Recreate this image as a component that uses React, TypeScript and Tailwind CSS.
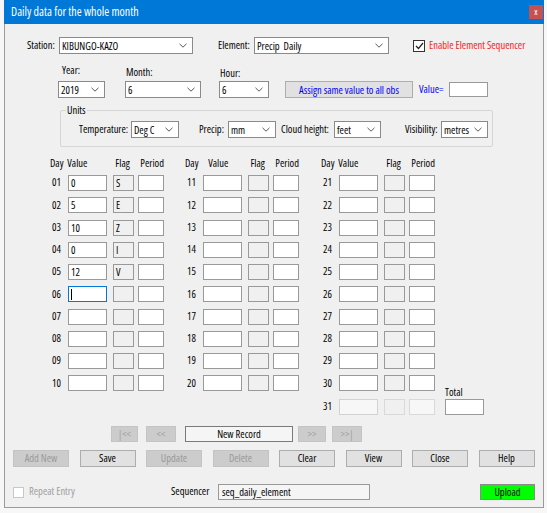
import React from "react";

const Chevron = () => (
  <svg width="8" height="5" viewBox="0 0 8 5" className="shrink-0">
    <path d="M0.5 0.8 L4 4.2 L7.5 0.8" fill="none" stroke="#5a5a5a" strokeWidth="1" />
  </svg>
);

function Combo({ className, value }: { className: string; value: string }) {
  return (
    <div
      className={
        "flex items-center justify-between border border-[#8a8a8a] bg-white pl-[2px] pr-[5px] leading-[14px] " +
        className
      }
    >
      <span className="whitespace-pre">{value}</span>
      <Chevron />
    </div>
  );
}

function Box({ className, value, focus }: { className: string; value?: string; focus?: boolean }) {
  return (
    <div
      className={
        "flex h-[16px] items-center border pl-[2px] leading-[14px] " +
        (focus ? "border-[#0078d7] " : "") +
        className
      }
    >
      {focus ? <span className="inline-block h-[11px] w-px bg-black" /> : <span>{value}</span>}
    </div>
  );
}

type Row = { day: string; value: string; flag: string; disabled?: boolean; focus?: boolean };

function DayColumn({ rows, valueHeader, className }: { rows: Row[]; valueHeader: string; className: string }) {
  return (
    <div className={"flex w-[114px] flex-col " + className}>
      <div className="flex h-[12px] items-center leading-[12px]">
        <span className="w-[18px]">Day</span>
        <span className={"w-[50px] " + valueHeader}>Value</span>
        <span className="w-[26px]">Flag</span>
        <span>Period</span>
      </div>
      <div className="mt-[3px] flex flex-col">
        {rows.map((r) => (
          <div key={r.day} className={"flex h-[22.25px] items-center " + (r.day === "31" ? "mt-[1px]" : "")}>
            <span className="w-[18px] pr-[7px] text-right">{r.day}</span>
            <Box
              className={
                "w-[39px] " +
                (r.disabled ? "border-[#d2d2d2] bg-[#f7f7f7]" : r.focus ? "bg-white" : "border-[#999999] bg-white")
              }
              value={r.value}
              focus={r.focus}
            />
            <Box
              className={
                "ml-[6px] w-[21px] " + (r.disabled ? "border-[#d9d9d9] bg-[#f0f0f0]" : "border-[#999999] bg-[#f0f0f0]")
              }
              value={r.flag}
            />
            <Box
              className={"ml-[4px] w-[26px] " + (r.disabled ? "border-[#d9d9d9] bg-[#f7f7f7]" : "border-[#999999] bg-white")}
            />
          </div>
        ))}
      </div>
    </div>
  );
}

const pad = (n: number) => (n < 10 ? "0" + n : "" + n);

const col1: Row[] = Array.from({ length: 10 }, (_, i) => {
  const data: [string, string][] = [
    ["0", "S"],
    ["5", "E"],
    ["10", "Z"],
    ["0", "I"],
    ["12", "V"],
  ];
  const d = data[i];
  return { day: pad(i + 1), value: d ? d[0] : "", flag: d ? d[1] : "", focus: i === 5 };
});
const col2: Row[] = Array.from({ length: 10 }, (_, i) => ({ day: pad(i + 11), value: "", flag: "" }));
const col3: Row[] = Array.from({ length: 11 }, (_, i) => ({
  day: pad(i + 21),
  value: "",
  flag: "",
  disabled: i === 10,
}));

function Btn({ label, disabled, className }: { label: string; disabled?: boolean; className?: string }) {
  return (
    <div
      className={
        "flex h-[17px] w-[56px] items-center justify-center border leading-[14px] " +
        (disabled ? "border-[#c4c4c4] bg-[#cccccc] text-[#9a9a9a]" : "border-[#adadad] bg-[#e1e1e1] text-black") +
        " " +
        (className || "")
      }
    >
      {label}
    </div>
  );
}

export default function App() {
  return (
    <div className="h-[513px] w-[547px] overflow-hidden bg-[#f7f7f7] pl-[4px] font-['Open_Sans',sans-serif] font-stretch-75% text-[10.5px] text-black">
      <div className="flex h-[508px] w-[540px] flex-col">
        {/* title bar */}
        <div className="flex h-[24px] shrink-0 items-center justify-between bg-[#0078d7] pl-[7px] pr-[1px]">
          <span className="text-[12px] text-white">Daily data for the whole month</span>
          <div className="flex h-[14px] w-[14px] items-center justify-center bg-[#c75050] text-[9px] leading-[10px] text-white">
            x
          </div>
        </div>

        {/* body */}
        <div className="flex flex-1 flex-col border-x border-b border-[#9a9a9a] bg-[#f0f0f0] pt-[13px]">
          {/* row 1 */}
          <div className="flex h-[17px] items-center pl-[22px]">
            <span className="w-[32px]">Station:</span>
            <Combo className="h-[17px] w-[134px]" value="KIBUNGO-KAZO" />
            <span className="ml-[25px] w-[36px]">Element:</span>
            <Combo className="h-[17px] w-[135px]" value="Precip  Daily" />
            <div className="ml-[24px] flex h-[12px] w-[12px] items-center justify-center border border-[#333333] bg-white">
              <svg width="9" height="8" viewBox="0 0 9 8">
                <path d="M1 4 L3.5 6.5 L8 1" fill="none" stroke="#222" strokeWidth="1.2" />
              </svg>
            </div>
            <span className="ml-[4px] text-[#ff1a1a]">Enable Element Sequencer</span>
          </div>

          {/* row 2 */}
          <div className="mt-[10px] flex items-end pl-[53px]">
            <div className="flex flex-col">
              <span className="mb-[5px] pl-[4px] leading-[12px]">Year:</span>
              <Combo className="h-[17px] w-[47px]" value="2019" />
            </div>
            <div className="ml-[20px] flex flex-col">
              <span className="mb-[3px] pl-[1px] leading-[12px]">Month:</span>
              <Combo className="h-[17px] w-[76px]" value="6" />
            </div>
            <div className="ml-[18px] flex flex-col">
              <span className="mb-[2px] pl-[1px] leading-[12px]">Hour:</span>
              <Combo className="h-[17px] w-[50px]" value="6" />
            </div>
            <div className="ml-[16px] flex h-[17px] items-center">
              <div className="flex h-[17px] w-[128px] items-center justify-center border border-[#adadad] bg-[#e1e1e1] leading-[14px] text-[#0000ff]">
                Assign same value to all obs
              </div>
              <span className="ml-[6px] w-[30px] text-[#0000ff]">Value=</span>
              <div className="h-[15px] w-[39px] border border-[#999999] bg-white" />
            </div>
          </div>

          {/* units */}
          <fieldset className="ml-[55px] mt-[6px] w-[433px] rounded-[2px] border border-[#d5d5d5] pb-[8px]">
            <legend className="ml-[5px] px-[1px] leading-[12px]">Units</legend>
            <div className="mt-[5px] flex h-[17px] items-center pl-[18px]">
              <span className="w-[52px]">Temperature:</span>
              <Combo className="h-[17px] w-[48px]" value="Deg C" />
              <span className="ml-[20px] w-[29px]">Precip:</span>
              <Combo className="h-[17px] w-[48px]" value="mm" />
              <span className="ml-[5px] w-[53px]">Cloud height:</span>
              <Combo className="h-[17px] w-[47px]" value="feet" />
              <span className="ml-[24px] w-[36px]">Visibility:</span>
              <Combo className="h-[17px] w-[47px]" value="metres" />
            </div>
          </fieldset>

          {/* grid */}
          <div className="mt-[10px] flex pl-[45px]">
            <DayColumn rows={col1} valueHeader="" className="" />
            <DayColumn rows={col2} valueHeader="pl-[6px]" className="ml-[21px]" />
            <DayColumn rows={col3} valueHeader="" className="ml-[22px]" />
            <div className="ml-[10px] flex flex-col justify-end">
              <span className="leading-[12px]">Total</span>
              <div className="mb-[3px] mt-[1px] h-[16px] w-[39px] border border-[#999999] bg-white" />
            </div>
          </div>

          {/* nav row */}
          <div className="mt-[8px] flex h-[16px] items-center pl-[106px] leading-[14px]">
            <div className="flex h-[16px] w-[27px] items-center justify-center border border-[#c4c4c4] bg-[#cccccc] text-[#a0a0a0]">
              |&lt;&lt;
            </div>
            <div className="ml-[8px] flex h-[16px] w-[30px] items-center justify-center border border-[#c4c4c4] bg-[#cccccc] text-[#a0a0a0]">
              &lt;&lt;
            </div>
            <div className="ml-[9px] flex h-[16px] w-[108px] items-center justify-center border border-[#7a7a7a] bg-[#f5f5f5]">
              New Record
            </div>
            <div className="ml-[5px] flex h-[16px] w-[28px] items-center justify-center border border-[#c4c4c4] bg-[#cccccc] text-[#a0a0a0]">
              &gt;&gt;
            </div>
            <div className="ml-[6px] flex h-[16px] w-[30px] items-center justify-center border border-[#c4c4c4] bg-[#cccccc] text-[#a0a0a0]">
              &gt;&gt;|
            </div>
          </div>

          {/* action buttons */}
          <div className="mt-[8px] flex gap-[10.5px] pl-[8px]">
            <Btn label="Add New" disabled />
            <Btn label="Save" />
            <Btn label="Update" disabled />
            <Btn label="Delete" disabled />
            <Btn label="Clear" />
            <Btn label="View" />
            <Btn label="Close" />
            <Btn label="Help" />
          </div>

          {/* bottom row */}
          <div className="mt-[17px] flex h-[17px] items-center pl-[8px]">
            <div className="flex w-[158px] items-center">
              <div className="h-[11px] w-[11px] border border-[#c8c8c8] bg-white" />
              <span className="ml-[5px] text-[#a0a0a0]">Repeat Entry</span>
            </div>
            <span className="w-[47px]">Sequencer</span>
            <div className="flex h-[16px] w-[152px] items-center border border-[#999999] bg-[#f5f5f5] pl-[3px] leading-[14px]">
              seq_daily_element
            </div>
            <div className="ml-[110px] flex h-[16px] w-[55px] items-center justify-center border border-[#8a8a8a] bg-[#00ff00] leading-[14px]">
              Upload
            </div>
          </div>
        </div>
      </div>
    </div>
  );
}
